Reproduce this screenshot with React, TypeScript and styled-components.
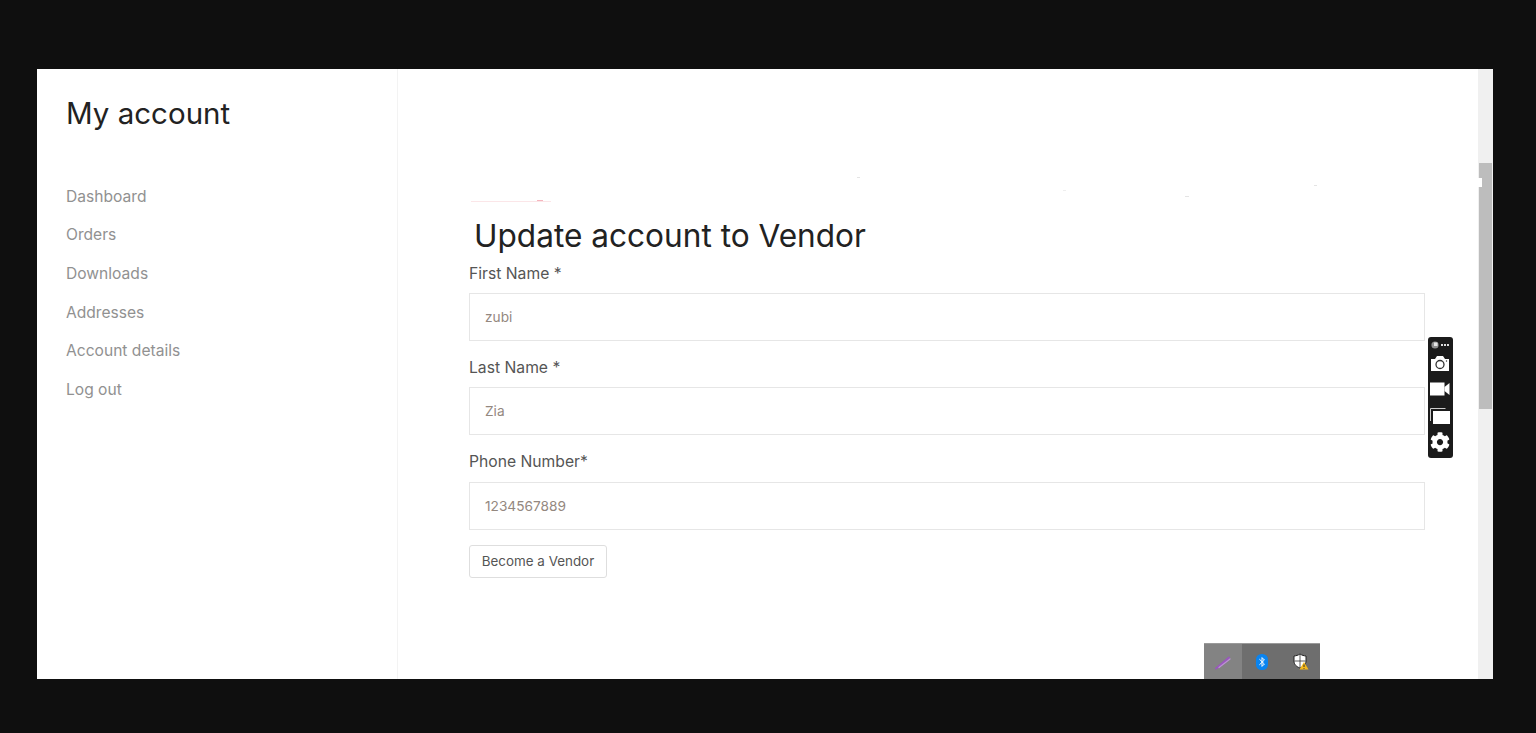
import styled, { createGlobalStyle } from 'styled-components';
import { FaCog } from 'react-icons/fa';

const GlobalStyle = createGlobalStyle`
  html, body {
    margin: 0;
    padding: 0;
    background: #0f0f0f;
  }
  * {
    box-sizing: border-box;
  }
`;

const Backdrop = styled.div`
  width: 100%;
  height: 733px;
  padding: 69px 43px 54px 37px;
  background: #0f0f0f;
  font-family: Inter, 'Noto Sans', sans-serif;
  overflow: hidden;
`;

const Frame = styled.div`
  position: relative;
  display: flex;
  height: 100%;
  background: #fff;
  overflow: hidden;
`;

const Sidebar = styled.aside`
  flex: 0 0 361px;
  padding: 26px 29px 0;
  border-right: 1px solid #f3f3f3;
`;

const SideTitle = styled.h2`
  margin: 0 0 55.5px;
  font-size: 29.5px;
  line-height: 36px;
  font-weight: 400;
  color: #222;
`;

const NavList = styled.nav`
  display: flex;
  flex-direction: column;
  gap: 19px;
`;

const NavLink = styled.a`
  font-size: 15.6px;
  line-height: 19.7px;
  color: #919191;
`;

const Main = styled.main`
  flex: 1;
  padding: 145px 53px 0 71px;
`;

const Heading = styled.h1`
  margin: 0 0 5.5px 5px;
  font-size: 31.6px;
  line-height: 44px;
  font-weight: 400;
  color: #222;
`;

const FieldList = styled.div`
  display: flex;
  flex-direction: column;
  gap: 17.3px;
  margin-bottom: 15px;
`;

const Label = styled.label`
  display: block;
  margin-bottom: 9.2px;
  font-size: 15.7px;
  line-height: 20px;
  color: #555;
`;

const TextInput = styled.input`
  display: block;
  width: 100%;
  height: 48px;
  padding: 0 15px;
  border: 1px solid #e6e6e6;
  background: #fff;
  font-family: inherit;
  font-size: 13.7px;
  color: #94887f;
  outline: none;
`;

const Submit = styled.button`
  display: block;
  height: 33px;
  width: 138px;
  padding: 0;
  border: 1px solid #dedede;
  border-radius: 3px;
  background: #fff;
  font-family: inherit;
  font-size: 13.4px;
  color: #555;
`;

const Scrollbar = styled.div`
  flex: 0 0 15px;
  padding: 94px 1px 0;
  background: #f0f0f0;
`;

const Thumb = styled.div`
  height: 246px;
  background: #bdbdbd;
`;

const Speck = styled.div<{ $left: number; $top: number; $width: number; $color: string }>`
  position: absolute;
  left: ${(p) => p.$left}px;
  top: ${(p) => p.$top}px;
  width: ${(p) => p.$width}px;
  height: 1px;
  background: ${(p) => p.$color};
`;

const ScrollNub = styled.div`
  position: absolute;
  left: 1441px;
  top: 109px;
  width: 4px;
  height: 9px;
  background: #fff;
`;

const CaptureBar = styled.div`
  position: absolute;
  left: 1391px;
  top: 268px;
  width: 25px;
  height: 121px;
  display: flex;
  flex-direction: column;
  align-items: center;
  padding: 3px 1px 0 0;
  background: #1b1b1b;
  border-radius: 3px;
  color: #fff;
`;

const BarTop = styled.div`
  display: flex;
  align-items: center;
  gap: 2px;
  height: 10px;
`;

const BarSlot = styled.div`
  flex: 0 0 26.3px;
  height: 26.3px;
  width: 100%;
  display: flex;
  align-items: center;
  justify-content: center;
`;

const Tray = styled.div`
  position: absolute;
  left: 1167px;
  top: 574px;
  width: 116px;
  height: 36px;
  display: flex;
  background: #6e6e6e;
  border-top: 1px solid #9a9a9a;
`;

const TraySlot = styled.div<{ $active?: boolean }>`
  flex: 0 0 ${(p) => (p.$active ? 38 : 39)}px;
  display: flex;
  align-items: center;
  justify-content: center;
  background: ${(p) => (p.$active ? '#838383' : 'transparent')};
`;

const fields = [
  { label: 'First Name *', value: 'zubi' },
  { label: 'Last Name *', value: 'Zia' },
  { label: 'Phone Number*', value: '1234567889' },
];

const navItems = ['Dashboard', 'Orders', 'Downloads', 'Addresses', 'Account details', 'Log out'];

const specks = [
  { left: 434, top: 132, width: 80, color: '#fbe6e8' },
  { left: 500, top: 131, width: 6, color: '#f5b5be' },
  { left: 820, top: 108, width: 3, color: '#e4e4e4' },
  { left: 1026, top: 121, width: 3, color: '#eeeeee' },
  { left: 1148, top: 127, width: 4, color: '#e4e4e4' },
  { left: 1277, top: 116, width: 3, color: '#e4e4e4' },
];

function CameraIcon() {
  return (
    <svg width="20" height="17" viewBox="0 0 20 17">
      <path d="M1 4h4l2-3h6l2 3h4v12H1z" fill="#fff" />
      <circle cx="10" cy="9.500" r="4" fill="none" stroke="#333" strokeWidth="1.300" />
      <circle cx="16.500" cy="6" r="0.700" fill="#333" />
    </svg>
  );
}

function VideoIcon() {
  return (
    <svg width="20" height="14" viewBox="0 0 20 14">
      <rect x="0" y="0.500" width="14.500" height="13" fill="#fff" />
      <path d="M14.500 5 19.500 1v12l-5-4z" fill="#fff" />
    </svg>
  );
}

function WindowsIcon() {
  return (
    <svg width="20" height="16" viewBox="0 0 20 16">
      <path d="M0.500 13V0.500h15" fill="none" stroke="#ccc" strokeWidth="1" />
      <rect x="3" y="3" width="17" height="13" fill="#fff" />
    </svg>
  );
}

function TinyLogo() {
  return (
    <svg width="8" height="8" viewBox="0 0 8 8">
      <circle cx="4" cy="4" r="3.600" fill="#8f8f8f" />
      <path d="M3 1.500h3.500v3.500H3z" fill="#e5e5e5" />
    </svg>
  );
}

function TinyDots() {
  return (
    <svg width="8" height="2" viewBox="0 0 8 2">
      <path d="M0 0h2v2H0zM3 0h2v2H3zM6 0h2v2H6z" fill="#ddd" />
    </svg>
  );
}

function PenIcon() {
  return (
    <svg width="16" height="16" viewBox="0 0 16 16">
      <path d="M1 14.500 14 3.500" stroke="#9a55bf" strokeWidth="1.800" strokeLinecap="round" />
      <path d="M4 13.500 15 5" stroke="#bd8ed8" strokeWidth="1.300" strokeLinecap="round" />
    </svg>
  );
}

function BluetoothIcon() {
  return (
    <svg width="12" height="16" viewBox="0 0 12 16">
      <rect width="12" height="16" rx="5.500" fill="#0a84f0" />
      <path d="M3.400 5.200 8.400 10 6 12.400V3.600L8.400 6 3.400 10.800" fill="none" stroke="#fff" strokeWidth="1" />
    </svg>
  );
}

function ShieldIcon() {
  return (
    <svg width="17" height="17" viewBox="0 0 17 17">
      <path d="M8 1c2 1.300 4 1.800 6 2v5c0 3.500-2.500 5.700-6 7-3.500-1.300-6-3.500-6-7V3c2-.2 4-.7 6-2z" fill="#fff" stroke="#222" strokeWidth="1" />
      <path d="M8 2v12M2.500 8h11" stroke="#333" strokeWidth="0.800" />
      <path d="M12 9l4.500 7.500h-9z" fill="#f4b81c" />
      <path d="M12 11.500v2.500M12 15v.8" stroke="#222" strokeWidth="0.900" />
    </svg>
  );
}

export default function App() {
  return (
    <>
      <GlobalStyle />
      <Backdrop>
        <Frame>
          <Sidebar>
            <SideTitle>My account</SideTitle>
            <NavList>
              {navItems.map((item) => (
                <NavLink key={item}>{item}</NavLink>
              ))}
            </NavList>
          </Sidebar>
          <Main>
            <Heading>Update account to Vendor</Heading>
            <FieldList>
              {fields.map((f) => (
                <div key={f.label}>
                  <Label>{f.label}</Label>
                  <TextInput defaultValue={f.value} />
                </div>
              ))}
            </FieldList>
            <Submit>Become a Vendor</Submit>
          </Main>
          <Scrollbar>
            <Thumb />
          </Scrollbar>
          <ScrollNub />
          {specks.map((s) => (
            <Speck key={s.left} $left={s.left} $top={s.top} $width={s.width} $color={s.color} />
          ))}
          <CaptureBar>
            <BarTop>
              <TinyLogo />
              <TinyDots />
            </BarTop>
            <BarSlot>
              <CameraIcon />
            </BarSlot>
            <BarSlot>
              <VideoIcon />
            </BarSlot>
            <BarSlot>
              <WindowsIcon />
            </BarSlot>
            <BarSlot>
              <FaCog size={20} />
            </BarSlot>
          </CaptureBar>
          <Tray>
            <TraySlot $active>
              <PenIcon />
            </TraySlot>
            <TraySlot>
              <BluetoothIcon />
            </TraySlot>
            <TraySlot>
              <ShieldIcon />
            </TraySlot>
          </Tray>
        </Frame>
      </Backdrop>
    </>
  );
}
